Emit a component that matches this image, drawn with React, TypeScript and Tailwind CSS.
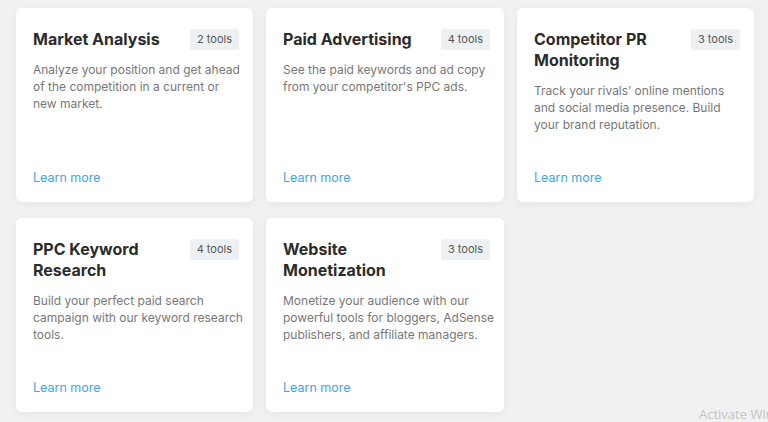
import React from 'react';

const cards = [
  {
    title: 'Market Analysis',
    tools: '2 tools',
    lines: ['Analyze your position and get ahead', 'of the competition in a current or', 'new market.'],
  },
  {
    title: 'Paid Advertising',
    tools: '4 tools',
    lines: ['See the paid keywords and ad copy', "from your competitor's PPC ads."],
  },
  {
    title: 'Competitor PR Monitoring',
    tools: '3 tools',
    lines: ['Track your rivals\u2019 online mentions', 'and social media presence. Build', 'your brand reputation.'],
  },
  {
    title: 'PPC Keyword Research',
    tools: '4 tools',
    lines: ['Build your perfect paid search', 'campaign with our keyword research', 'tools.'],
  },
  {
    title: 'Website Monetization',
    tools: '3 tools',
    lines: ['Monetize your audience with our', 'powerful tools for bloggers, AdSense', 'publishers, and affiliate managers.'],
  },
];

function ToolCard({ title, tools, lines }: { title: string; tools: string; lines: string[] }) {
  return (
    <div className="bg-white rounded-[6px] shadow-[0_2px_10px_rgba(0,0,0,0.05)] h-[194px] flex flex-col pl-[17px] pr-[14px] pt-[21px] pb-[16px]">
      <div className="flex items-start justify-between gap-3">
        <h3 className="text-[16px] leading-[21px] font-bold text-[#2b2b2b]">{title}</h3>
        <span className="shrink-0 bg-[#eef1f4] text-[#555] text-[11px] leading-[21px] px-[7px] rounded-[2px]">
          {tools}
        </span>
      </div>
      <p className="mt-[11px] text-[12px] leading-[17px] text-[#777]">
        {lines.map((l) => (
          <span key={l} className="block whitespace-nowrap">
            {l}
          </span>
        ))}
      </p>
      <a href="#" className="mt-auto text-[12.5px] leading-[16px] text-[#42a6e6]">
        Learn more
      </a>
    </div>
  );
}

export default function App() {
  return (
    <div
      className="relative w-[768px] h-[422px] overflow-hidden bg-[#f1f1f2]"
      style={{ fontFamily: 'Inter, "Noto Sans", sans-serif' }}
    >
      <div className="grid grid-cols-[237px_238px_237px] gap-x-[13px] gap-y-[16px] pl-[16px] pt-[8px]">
        {cards.map((c) => (
          <ToolCard key={c.title} {...c} />
        ))}
      </div>
      <div
        className="absolute left-[699px] top-[405px] text-[13px] text-[#c4c4c4] whitespace-nowrap"
        style={{ fontFamily: '"Open Sans", sans-serif' }}
      >
        Activate Windows
      </div>
    </div>
  );
}
